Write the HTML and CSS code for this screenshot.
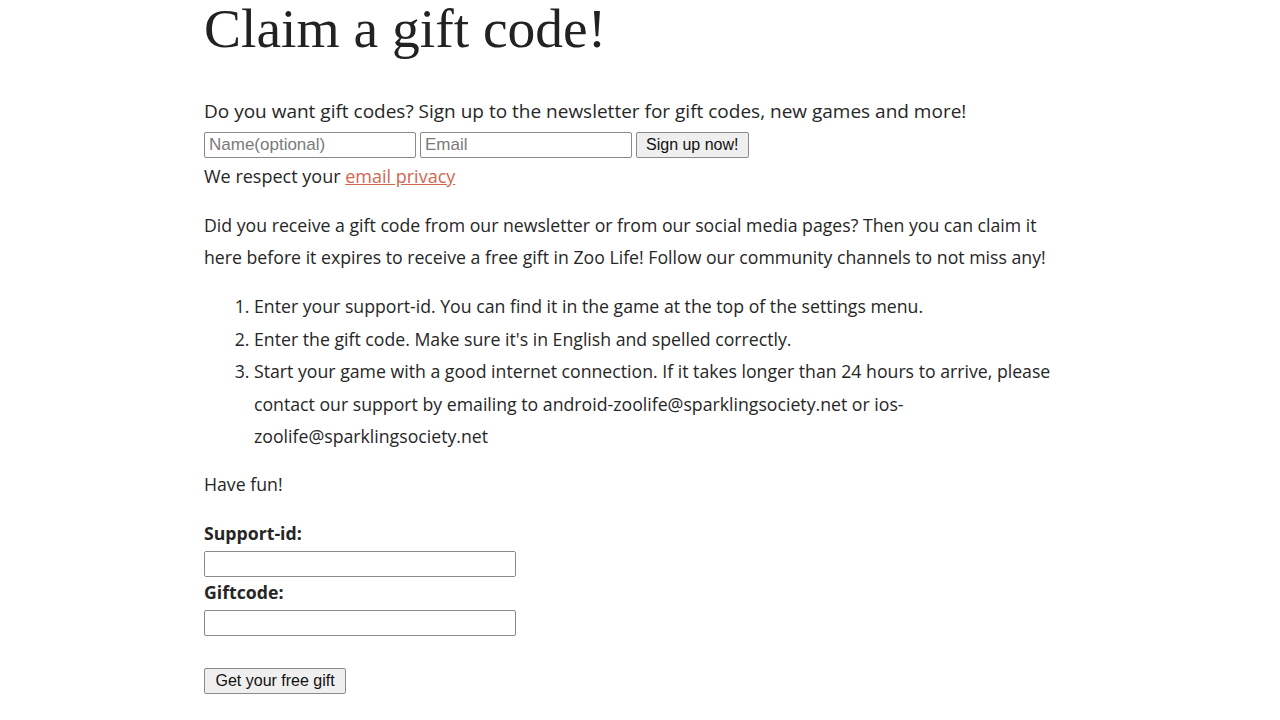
FILE: index.html
```html
<!DOCTYPE html>
<html>
<head>
<meta charset="utf-8">
<link rel="stylesheet" href="styles.css">
</head>
<body>
<main class="page">
  <h1 class="title">Claim a gift code!</h1>
  <section class="newsletter">
    <p class="lead">Do you want gift codes? Sign up to the newsletter for gift codes, new games and more!</p>
    <form class="signup">
      <input class="field field-name" type="text" placeholder="Name(optional)">
      <input class="field field-email" type="text" placeholder="Email">
      <button class="btn" type="button">Sign up now!</button>
    </form>
    <p class="privacy">We respect your <a href="#" class="link">email privacy</a></p>
  </section>
  <p class="intro">Did you receive a gift code from our newsletter or from our social media pages? Then you can claim it here before it expires to receive a free gift in Zoo Life! Follow our community channels to not miss any!</p>
  <ol class="steps">
    <li>Enter your support-id. You can find it in the game at the top of the settings menu.</li>
    <li>Enter the gift code. Make sure it's in English and spelled correctly.</li>
    <li>Start your game with a good internet connection. If it takes longer than 24 hours to arrive, please contact our support by emailing to android-zoolife@sparklingsociety.net or ios-zoolife@sparklingsociety.net</li>
  </ol>
  <p class="fun">Have fun!</p>
  <form class="claim">
    <label class="label">Support-id:</label>
    <input class="field field-wide" type="text">
    <label class="label">Giftcode:</label>
    <input class="field field-wide" type="text">
    <button class="btn btn-gift" type="button">Get your free gift</button>
  </form>
</main>
</body>
</html>
```

FILE: styles.css
```css
html, body {
  margin: 0;
  padding: 0;
  background: #ffffff;
}
body {
  color: #262626;
  font-family: "Open Sans", "Noto Sans", sans-serif;
  font-size: 17.7px;
}
.page {
  width: 872px;
  margin: 0 auto;
}
.title {
  margin: 0;
  padding-top: 0;
  font-family: "Liberation Serif", serif;
  font-weight: 400;
  font-size: 55.5px;
  line-height: 58px;
  color: #222;
}
.newsletter {
  margin-top: 40px;
}
.lead {
  margin: 0;
  font-size: 19px;
  line-height: 27px;
}
.signup {
  display: flex;
  gap: 4px;
  margin-top: 7px;
}
.field {
  box-sizing: border-box;
  height: 26px;
  border: 1px solid #8a8a8a;
  border-radius: 2px;
  padding: 1px 4px;
  font-family: "Liberation Sans", Arial, sans-serif;
  font-size: 17px;
  color: #222;
}
.field::placeholder {
  color: #7a7a7a;
}
.field-name, .field-email {
  width: 212px;
}
.btn {
  box-sizing: border-box;
  height: 26px;
  padding: 0 9px;
  border: 1px solid #8a8a8a;
  border-radius: 2px;
  background: #efefef;
  font-family: "Liberation Sans", Arial, sans-serif;
  font-size: 16px;
  color: #111;
}
.privacy {
  margin: 4px 0 0;
  font-size: 18px;
  line-height: 28px;
}
.link {
  color: #d3664f;
}
.intro {
  margin: 19px 0 0;
  line-height: 32px;
}
.steps {
  margin: 17px 0 0;
  padding-left: 50px;
  line-height: 32.5px;
}
.fun {
  margin: 15px 0 0;
  line-height: 32px;
}
.claim {
  display: flex;
  flex-direction: column;
  align-items: flex-start;
  margin-top: 18px;
}
.label {
  font-weight: 700;
  line-height: 30px;
  margin-bottom: 3px;
}
.field-wide {
  width: 312px;
}
.btn-gift {
  margin-top: 32px;
  padding: 0 10.5px;
}
```
